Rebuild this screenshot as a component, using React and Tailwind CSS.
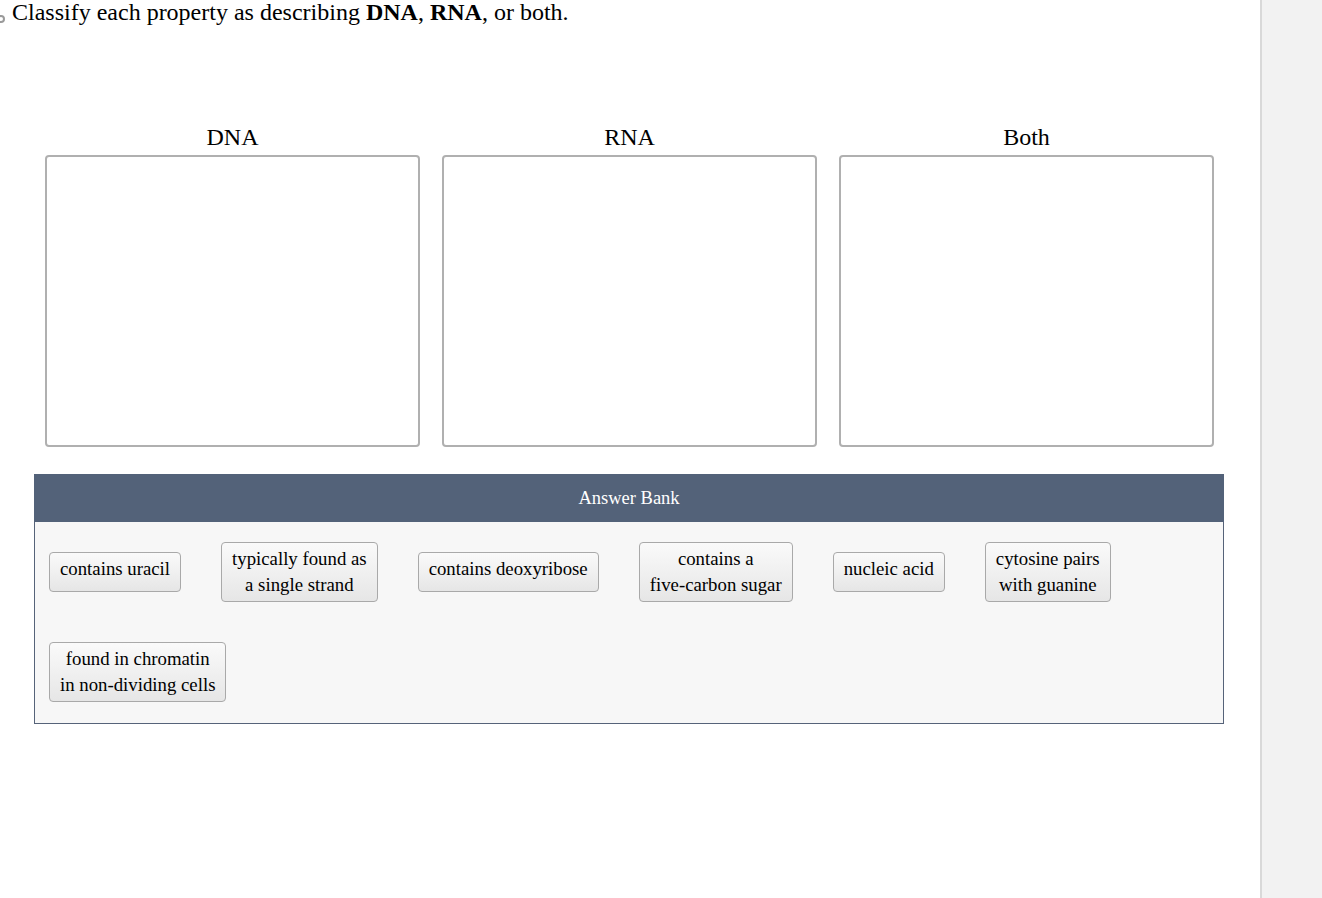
export default function App() {
  const items = [
    ["contains uracil"],
    ["typically found as", "a single strand"],
    ["contains deoxyribose"],
    ["contains a", "five-carbon sugar"],
    ["nucleic acid"],
    ["cytosine pairs", "with guanine"],
    ["found in chromatin", "in non-dividing cells"],
  ];
  const columns = ["DNA", "RNA", "Both"];

  return (
    <div className="flex min-h-[898px] bg-white text-black" style={{ fontFamily: '"Liberation Serif", "Times New Roman", serif' }}>
      <div className="relative w-[1260px] shrink-0">
        {/* question prompt */}
        <div className="absolute left-[-3px] top-[15px] h-[8px] w-[8px] rounded-full border-2 border-[#9a9a9a]" />
        <div className="pl-[12px] text-[24px] leading-[24px]">
          Classify each property as describing <b>DNA</b>, <b>RNA</b>, or both.
        </div>

        {/* drop zones */}
        <div className="mt-[101px] flex gap-[22px] pl-[45px]">
          {columns.map((c) => (
            <div key={c} className="flex w-[375px] flex-col">
              <div className="h-[30px] text-center text-[24px] leading-[24px]">{c}</div>
              <div className="h-[292px] rounded-[4px] border-2 border-[#b0b0b0] bg-white" />
            </div>
          ))}
        </div>

        {/* answer bank */}
        <div className="ml-[34px] mt-[27px] w-[1190px]">
          <div className="flex h-[48px] items-center justify-center bg-[#536279] pt-[1px] text-[18.5px] text-white">
            Answer Bank
          </div>
          <div className="flex flex-wrap items-center gap-x-[40px] gap-y-[40px] border border-t-0 border-[#566379] bg-[#f7f7f7] pb-[21px] pl-[14px] pt-[20px]">
            {items.map((lines) => (
              <div
                key={lines.join(" ")}
                className="flex min-h-[40px] flex-col rounded-[4px] border border-[#a9a9a9] bg-gradient-to-b from-[#fafafa] to-[#e6e6e6] px-[10px] py-[3px] text-center text-[18.8px] leading-[26px] text-black"
              >
                {lines.map((l) => (
                  <span key={l} className="whitespace-nowrap">{l}</span>
                ))}
              </div>
            ))}
          </div>
        </div>
      </div>
      <div className="flex-1 border-l-2 border-[#d9d9d9] bg-[#f2f2f2]" />
    </div>
  );
}
